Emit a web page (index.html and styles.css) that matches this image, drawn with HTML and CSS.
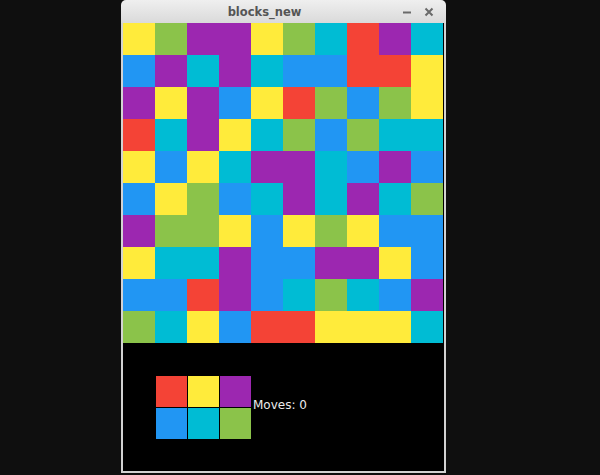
FILE: index.html
```html
<!DOCTYPE html>
<html>
<head>
<meta charset="utf-8">
<link rel="stylesheet" href="styles.css">
</head>
<body>
<div class="window">
  <div class="titlebar">
    <span class="title">blocks_new</span>
    <span class="controls">
      <svg class="btn" width="10" height="10" viewBox="0 0 10 10"><path d="M1 5.5H9" stroke="#6a6a6a" stroke-width="2"/></svg>
      <svg class="btn" width="10" height="10" viewBox="0 0 10 10"><path d="M1.5 1.5L8.5 8.5M8.5 1.5L1.5 8.5" stroke="#6a6a6a" stroke-width="2"/></svg>
    </span>
  </div>
  <div class="body">
    <div class="grid">
      <div class="y"></div><div class="g"></div><div class="p"></div><div class="p"></div><div class="y"></div><div class="g"></div><div class="c"></div><div class="r"></div><div class="p"></div><div class="c"></div>
      <div class="b"></div><div class="p"></div><div class="c"></div><div class="p"></div><div class="c"></div><div class="b"></div><div class="b"></div><div class="r"></div><div class="r"></div><div class="y"></div>
      <div class="p"></div><div class="y"></div><div class="p"></div><div class="b"></div><div class="y"></div><div class="r"></div><div class="g"></div><div class="b"></div><div class="g"></div><div class="y"></div>
      <div class="r"></div><div class="c"></div><div class="p"></div><div class="y"></div><div class="c"></div><div class="g"></div><div class="b"></div><div class="g"></div><div class="c"></div><div class="c"></div>
      <div class="y"></div><div class="b"></div><div class="y"></div><div class="c"></div><div class="p"></div><div class="p"></div><div class="c"></div><div class="b"></div><div class="p"></div><div class="b"></div>
      <div class="b"></div><div class="y"></div><div class="g"></div><div class="b"></div><div class="c"></div><div class="p"></div><div class="c"></div><div class="p"></div><div class="c"></div><div class="g"></div>
      <div class="p"></div><div class="g"></div><div class="g"></div><div class="y"></div><div class="b"></div><div class="y"></div><div class="g"></div><div class="y"></div><div class="b"></div><div class="b"></div>
      <div class="y"></div><div class="c"></div><div class="c"></div><div class="p"></div><div class="b"></div><div class="b"></div><div class="p"></div><div class="p"></div><div class="y"></div><div class="b"></div>
      <div class="b"></div><div class="b"></div><div class="r"></div><div class="p"></div><div class="b"></div><div class="c"></div><div class="g"></div><div class="c"></div><div class="b"></div><div class="p"></div>
      <div class="g"></div><div class="c"></div><div class="y"></div><div class="b"></div><div class="r"></div><div class="r"></div><div class="y"></div><div class="y"></div><div class="y"></div><div class="c"></div>
    </div>
    <div class="panel">
      <div class="preview">
        <div class="r"></div><div class="y"></div><div class="p"></div>
        <div class="b"></div><div class="c"></div><div class="g"></div>
      </div>
      <span class="moves">Moves: 0</span>
    </div>
  </div>
</div>
</body>
</html>
```

FILE: styles.css
```css
html, body {
  margin: 0;
  padding: 0;
  background: #0f0f0f;
  width: 600px;
  height: 475px;
  overflow: hidden;
}
.window {
  margin-left: 121px;
  width: 325px;
  height: 473px;
  display: flex;
  flex-direction: column;
}
.titlebar {
  height: 23px;
  box-sizing: border-box;
  background: linear-gradient(#efefef, #dadada);
  border-radius: 5px 5px 0 0;
  display: flex;
  align-items: center;
  padding: 0 12px 0 0;
  font-family: "DejaVu Sans", sans-serif;
}
.title {
  flex: 1;
  text-align: center;
  font-weight: bold;
  font-size: 11.5px;
  color: #555;
  padding-left: 6px;
}
.controls {
  display: flex;
  gap: 12px;
  align-items: center;
}
.btn { display: block; }
.body {
  flex: 1;
  border: 2px solid #d2d2d2;
  border-top: none;
  display: flex;
  flex-direction: column;
  background: #000;
}
.grid {
  display: grid;
  grid-template-columns: repeat(10, 32px);
  grid-auto-rows: 32px;
}
.panel {
  flex: 1;
  background: #000;
  display: flex;
  align-items: flex-start;
  padding: 33px 0 0 33px;
}
.preview {
  display: grid;
  grid-template-columns: repeat(3, 31px);
  grid-auto-rows: 31px;
  gap: 1px;
}
.moves {
  margin-left: 2px;
  margin-top: 22px;
  line-height: 14px;
  font-family: "DejaVu Sans", sans-serif;
  font-size: 12px;
  color: #ececec;
}
.y { background: #ffeb3b; }
.g { background: #8bc34a; }
.p { background: #9c27b0; }
.c { background: #00bcd4; }
.r { background: #f44336; }
.b { background: #2196f3; }
```
